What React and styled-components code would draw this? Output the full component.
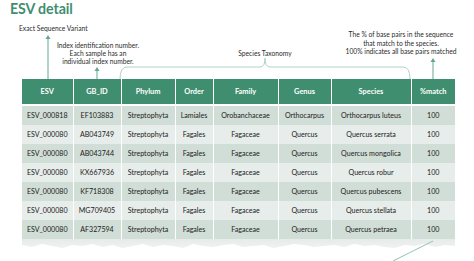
import React from "react";
import styled, { createGlobalStyle } from "styled-components";

const Global = createGlobalStyle`
  html, body { margin: 0; padding: 0; background: #ffffff; }
  body { font-family: "Lato", "Open Sans", sans-serif; }
`;

const GREEN = "#3f8e6f";
const LINE = "#62a88d";
const BRACE = "#aed3c5";

const Page = styled.div`
  position: relative;
  width: 474px;
  height: 261px;
  overflow: hidden;
  background: #fff;
`;

const Title = styled.h1`
  margin: 0;
  height: 20px;
  padding: 1px 0 0 10px;
  box-sizing: border-box;
  font-family: "Lato", sans-serif;
  font-weight: 700;
  font-size: 14.2px;
  line-height: 16px;
  color: ${GREEN};
  letter-spacing: -0.1px;
`;

const Annotations = styled.div`
  position: relative;
  height: 59px;
`;

const Note = styled.div`
  position: absolute;
  top: ${(p) => p.$top}px;
  left: ${(p) => p.$x}px;
  transform: translateX(${(p) => (p.$center ? "-50%" : "0")});
  font-family: "Lato", sans-serif;
  font-size: 6.7px;
  line-height: ${(p) => p.$lh || 8}px;
  color: #2b2b2b;
  text-align: center;
  white-space: nowrap;
`;

const Overlay = styled.svg`
  position: absolute;
  left: 0;
  top: 0;
  pointer-events: none;
`;

const TableWrap = styled.div`
  margin-left: 22px;
  width: 433px;
`;

const Table = styled.table`
  border-collapse: collapse;
  table-layout: fixed;
  width: 433px;
  font-family: "Lato", sans-serif;
`;

const Th = styled.th`
  background: ${GREEN};
  color: #fff;
  font-weight: 700;
  font-size: 7.4px;
  height: 25px;
  padding: 0;
  text-align: center;
  border-right: 1.5px solid #fff;
  border-bottom: 2px solid #fff;
  &:last-child { border-right: none; }
`;

const Td = styled.td`
  font-size: 7.1px;
  color: #222;
  height: 19px;
  padding: 0;
  text-align: center;
  white-space: nowrap;
  border-right: 1.5px solid #fff;
  &:last-child { border-right: none; }
`;

const Tr = styled.tr`
  background: ${(p) => (p.$odd ? "#d1ddd7" : "#e7edea")};
`;

const Torn = styled.div`
  height: 9px;
  width: 433px;
  background: linear-gradient(#e6ecea, #eef1f0);
  clip-path: polygon(${(p) => p.$pts});
`;

const cols = [
  ["ESV", 51],
  ["GB_ID", 48],
  ["Phylum", 54],
  ["Order", 38],
  ["Family", 65],
  ["Genus", 53],
  ["Species", 80],
  ["%match", 44],
];

const rows = [
  ["ESV_000818", "EF103883", "Streptophyta", "Lamiales", "Orobanchaceae", "Orthocarpus", "Orthocarpus luteus", "100"],
  ["ESV_000080", "AB043749", "Streptophyta", "Fagales", "Fagaceae", "Quercus", "Quercus serrata", "100"],
  ["ESV_000080", "AB043744", "Streptophyta", "Fagales", "Fagaceae", "Quercus", "Quercus mongolica", "100"],
  ["ESV_000080", "KX667936", "Streptophyta", "Fagales", "Fagaceae", "Quercus", "Quercus robur", "100"],
  ["ESV_000080", "KF718308", "Streptophyta", "Fagales", "Fagaceae", "Quercus", "Quercus pubescens", "100"],
  ["ESV_000080", "MG709405", "Streptophyta", "Fagales", "Fagaceae", "Quercus", "Quercus stellata", "100"],
  ["ESV_000080", "AF327594", "Streptophyta", "Fagales", "Fagaceae", "Quercus", "Quercus petraea", "100"],
];

const tornPoints = (() => {
  const pts = ["0 0", "433px 0"];
  const ys = [6, 8, 5, 7, 9, 6, 7, 5, 8, 6, 9, 7, 5, 8, 6, 7, 9, 5, 7, 8, 6, 5, 8, 7, 6, 9, 7, 5, 6, 8, 7, 6, 8, 5, 7, 6, 8, 9, 6, 7, 5, 8, 6, 7];
  const step = 433 / (ys.length - 1);
  for (let i = ys.length - 1; i >= 0; i--) {
    pts.push(`${(i * step).toFixed(1)}px ${ys[i]}px`);
  }
  return pts.join(", ");
})();

function Arrow({ x, y1, y2 }) {
  return (
    <g>
      <line x1={x} y1={y1} x2={x} y2={y2 + 3} stroke={LINE} strokeWidth="1" />
      <polygon points={`${x},${y2} ${x - 2.5},${y2 + 4} ${x + 2.5},${y2 + 4}`} fill={LINE} />
    </g>
  );
}

export default function App() {
  return (
    <Page>
      <Global />
      <Title>ESV detail</Title>
      <Annotations>
        <Note $x={19} $top={4}>Exact Sequence Variant</Note>
        <Note $x={98} $top={21} $center>
          Index identification number.
          <br />
          Each sample has an
          <br />
          individual index number.
        </Note>
        <Note $x={265} $top={29} $center>Species Taxonomy</Note>
        <Note $x={401} $top={10} $lh={8.5} $center>
          The % of base pairs in the sequence
          <br />
          that match to the species.
          <br />
          100% indicates all base pairs matched
        </Note>
      </Annotations>
      <TableWrap>
        <Table>
          <colgroup>
            {cols.map(([n, w]) => (
              <col key={n} style={{ width: w }} />
            ))}
          </colgroup>
          <thead>
            <tr>
              {cols.map(([n]) => (
                <Th key={n}>{n}</Th>
              ))}
            </tr>
          </thead>
          <tbody>
            {rows.map((r, i) => (
              <Tr key={i} $odd={i % 2 === 0}>
                {r.map((c, j) => (
                  <Td key={j}>{c}</Td>
                ))}
              </Tr>
            ))}
          </tbody>
        </Table>
        <Torn $pts={tornPoints} />
      </TableWrap>
      <Overlay width="474" height="261" viewBox="0 0 474 261">
        <Arrow x={48} y1={79} y2={35} />
        <Arrow x={97} y1={79} y2={67} />
        <Arrow x={433} y1={79} y2={58} />
        <path
          d="M120 79 Q120 67 127 67 L260 67 Q265 67 265 58 Q265 67 270 67 L403 67 Q410 67 410 79"
          fill="none"
          stroke={BRACE}
          strokeWidth="1"
        />
        <line x1="433" y1="241" x2="393" y2="261" stroke="#8fc4b1" strokeWidth="1" />
      </Overlay>
    </Page>
  );
}
